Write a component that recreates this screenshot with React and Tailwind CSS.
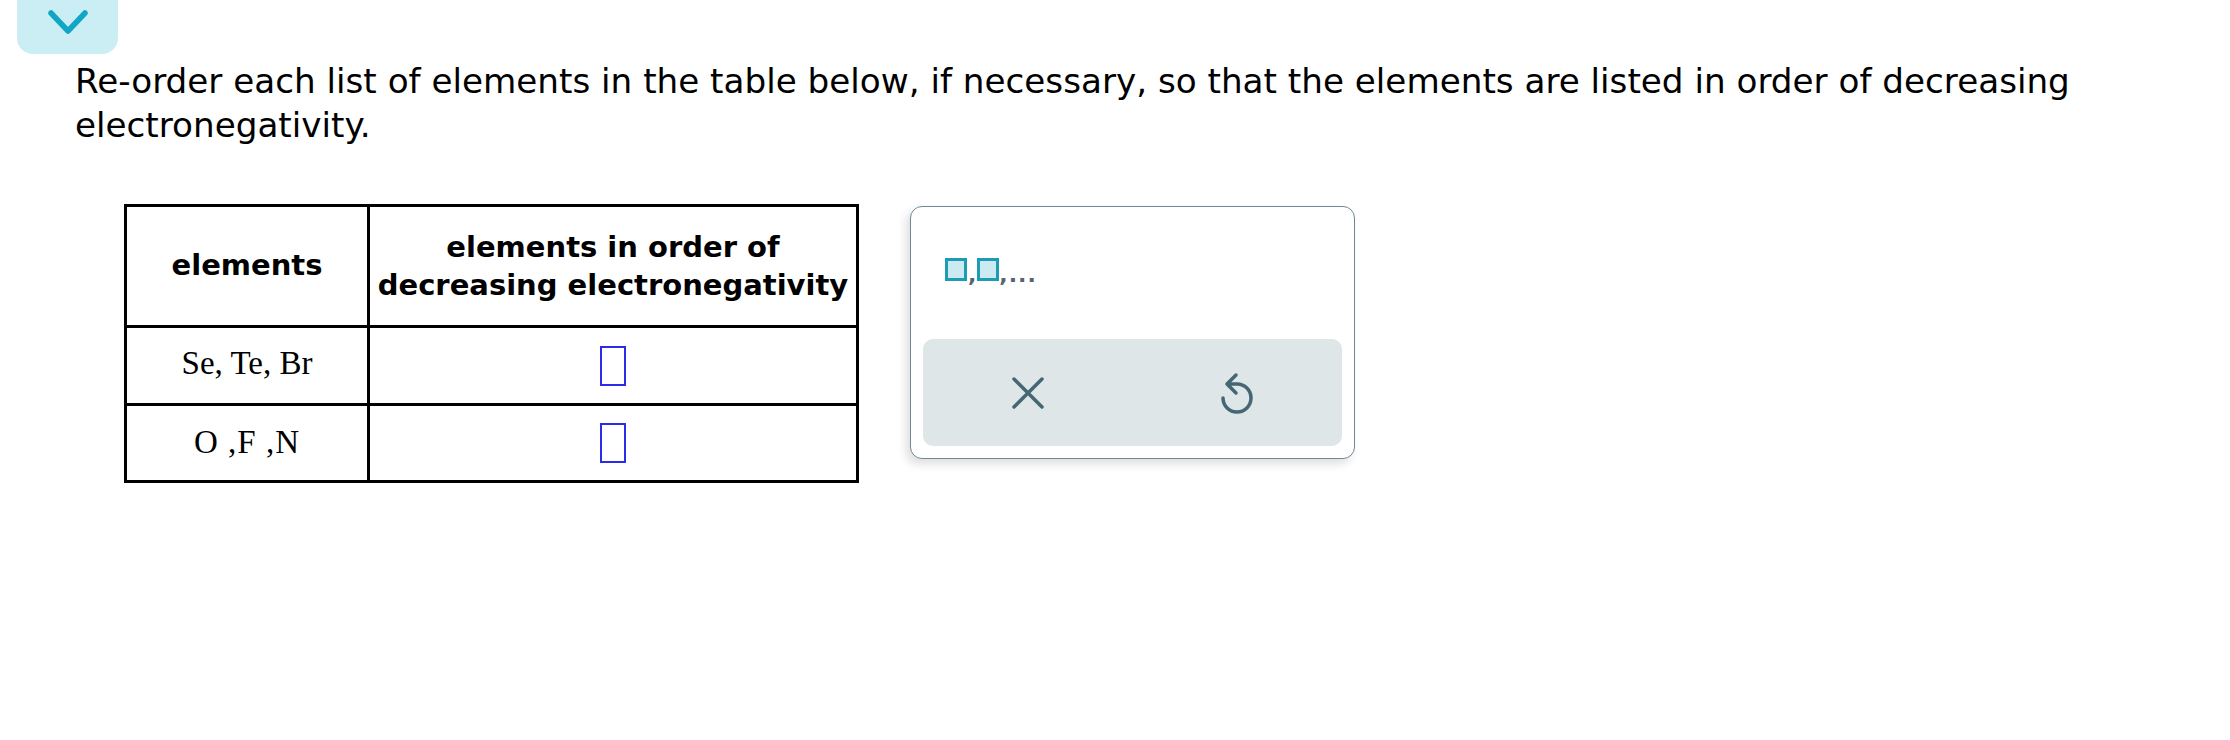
import React from "react";

const Chevron = () => (
  <svg width="40" height="26" viewBox="0 0 40 26" fill="none">
    <polyline
      points="3,3 20,21 37,3"
      stroke="#12a6c6"
      strokeWidth="5.5"
      strokeLinecap="round"
      strokeLinejoin="round"
    />
  </svg>
);

const Slot = () => (
  <span className="inline-block h-[23px] w-[22px] border-[3px] border-[#1d9db5] bg-[#cdeaf1]" />
);

const BlueBox = () => (
  <span className="inline-block h-[40px] w-[26px] border-2 border-[#2b2bea]" />
);

export default function App() {
  return (
    <div className="min-h-[740px] w-full bg-white font-['DejaVu_Sans',sans-serif] text-black">
      <div className="ml-[17px] flex h-[54px] w-[101px] justify-center rounded-b-[16px] bg-[#cbedf4] pt-[10px]">
        <Chevron />
      </div>

      <p className="mt-[5px] px-[75px] text-[34.2px] leading-[44px]">
        Re-order each list of elements in the table below, if necessary, so that the elements are listed in order of decreasing electronegativity.
      </p>

      <div className="ml-[124px] mt-[57px] flex items-start gap-[51px]">
        <div className="grid w-[735px] grid-cols-[243px_486px] border-[3px] border-black">
          <div className="flex h-[121px] items-center justify-center border-b-[3px] border-r-[3px] border-black text-[29px] font-bold">
            elements
          </div>
          <div className="flex h-[121px] flex-col items-center justify-center border-b-[3px] border-black text-center text-[29px] font-bold leading-[38px]">
            <span>elements in order of</span>
            <span>decreasing electronegativity</span>
          </div>

          <div className="flex h-[78px] items-center justify-center border-b-[3px] border-r-[3px] border-black pb-[3px] font-['Liberation_Serif',serif] text-[33px]">
            Se, Te, Br
          </div>
          <div className="flex h-[78px] items-center justify-center border-b-[3px] border-black">
            <BlueBox />
          </div>

          <div className="flex h-[74px] items-center justify-center border-r-[3px] border-black font-['Liberation_Serif',serif] text-[33px] tracking-[1px]">
            O ,F ,N
          </div>
          <div className="flex h-[74px] items-center justify-center">
            <BlueBox />
          </div>
        </div>

        <div className="mt-[2px] flex h-[253px] w-[445px] flex-col rounded-[12px] border-[1.5px] border-[#6f8a94] bg-white p-[12px] shadow-[-4px_5px_10px_rgba(0,0,0,0.13)]">
          <div className="flex flex-1 items-start pl-[22px] pt-[39px]">
            <div className="flex items-end text-[22px] font-bold leading-none text-[#55656d]">
              <Slot />
              <span className="mx-[1px] translate-y-[5px]">,</span>
              <Slot />
              <span className="translate-y-[5px] tracking-[1px]">,...</span>
            </div>
          </div>
          <div className="grid h-[107px] grid-cols-2 place-items-center rounded-[10px] bg-[#dfe6e8]">
            <svg width="32" height="32" viewBox="0 0 32 32" fill="none">
              <path
                d="M2 2 L30 30 M30 2 L2 30"
                stroke="#456774"
                strokeWidth="3.5"
                strokeLinecap="round"
              />
            </svg>
            <svg width="40" height="44" viewBox="0 0 40 44" fill="none">
              <path
                d="M6 27 A14 14 0 1 0 20 13 L10 13 M19 4 L10 13 L19 22"
                stroke="#456774"
                strokeWidth="3.5"
                strokeLinecap="round"
                strokeLinejoin="round"
              />
            </svg>
          </div>
        </div>
      </div>
    </div>
  );
}
